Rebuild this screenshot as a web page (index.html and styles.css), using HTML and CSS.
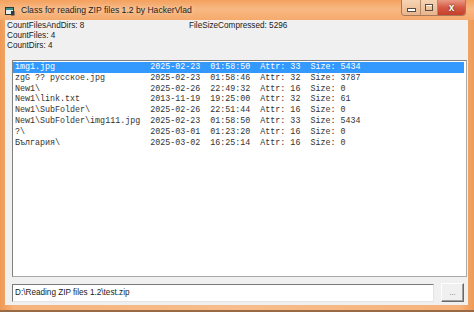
FILE: index.html
```html
<!DOCTYPE html>
<html lang="en">
<head>
    <meta charset="UTF-8">
    <title>Class for reading ZIP files 1.2 by HackerVlad</title>
    <link rel="stylesheet" href="styles.css">
</head>
<body>
    <div class="window">
        <div class="titlebar">
            <svg class="app-icon" width="10" height="10" viewBox="0 0 10 10">
                <rect x="0.5" y="1.5" width="8" height="7" fill="#e8eef0" stroke="#2b3a3a"/>
                <rect x="1" y="2" width="7" height="2" fill="#3f8f8a"/>
                <rect x="6" y="5" width="3.5" height="4.5" fill="#2b3a3a"/>
            </svg>
            <span class="title">Class for reading ZIP files 1.2 by HackerVlad</span>
            <div class="caption-buttons">
                <span class="cap cap-min"><i></i></span>
                <span class="cap cap-max"><i></i></span>
                <span class="cap cap-close">x</span>
            </div>
        </div>

        <div class="client">
            <div class="stats">
                <div class="stats-col">
                    <div>CountFilesAndDirs: 8</div>
                    <div>CountFiles: 4</div>
                    <div>CountDirs: 4</div>
                </div>
                <div class="stats-col">
                    <div>FileSizeCompressed: 5296</div>
                </div>
            </div>

            <div class="listbox">
                <div class="row selected"><span class="c-name">img1.jpg</span><span class="c-date">2025-02-23</span><span class="c-time">01:58:50</span><span class="c-attr">Attr: 33</span><span>Size: 5434</span></div>
                <div class="row"><span class="c-name">zgG ?? русское.jpg</span><span class="c-date">2025-02-23</span><span class="c-time">01:58:46</span><span class="c-attr">Attr: 32</span><span>Size: 3787</span></div>
                <div class="row"><span class="c-name">New1\</span><span class="c-date">2025-02-26</span><span class="c-time">22:49:32</span><span class="c-attr">Attr: 16</span><span>Size: 0</span></div>
                <div class="row"><span class="c-name">New1\link.txt</span><span class="c-date">2013-11-19</span><span class="c-time">19:25:00</span><span class="c-attr">Attr: 32</span><span>Size: 61</span></div>
                <div class="row"><span class="c-name">New1\SubFolder\</span><span class="c-date">2025-02-26</span><span class="c-time">22:51:44</span><span class="c-attr">Attr: 16</span><span>Size: 0</span></div>
                <div class="row"><span class="c-name">New1\SubFolder\img111.jpg</span><span class="c-date">2025-02-23</span><span class="c-time">01:58:50</span><span class="c-attr">Attr: 33</span><span>Size: 5434</span></div>
                <div class="row"><span class="c-name">?\</span><span class="c-date">2025-03-01</span><span class="c-time">01:23:20</span><span class="c-attr">Attr: 16</span><span>Size: 0</span></div>
                <div class="row"><span class="c-name">България\</span><span class="c-date">2025-03-02</span><span class="c-time">16:25:14</span><span class="c-attr">Attr: 16</span><span>Size: 0</span></div>
            </div>

            <div class="path-row">
                <div class="path-input">D:\Reading ZIP files 1.2\test.zip</div>
                <button class="browse">...</button>
            </div>
        </div>
    </div>
</body>
</html>
```

FILE: styles.css
```css
body {
    margin: 0;
    padding: 0;
    width: 474px;
    height: 312px;
    overflow: hidden;
    font-family: "Liberation Sans", Arial, sans-serif;
}

.window {
    width: 474px;
    height: 312px;
    box-sizing: border-box;
    background: linear-gradient(90deg, #ee9a55 0%, #f6b37c 3%, #f7bd8c 50%, #f6b27b 97%, #ee9a55 100%);
    border-bottom: 2px solid #9a6a44;
    display: flex;
    flex-direction: column;
}

.titlebar {
    height: 20px;
    display: flex;
    align-items: center;
    background: linear-gradient(180deg, #f3a15e 0%, #f8b883 45%, #f5aa6c 100%);
}

.app-icon {
    margin-left: 5px;
    margin-top: 1px;
}

.title {
    margin-left: 6px;
    font-size: 8.6px;
    color: #1e1e1e;
    text-shadow: 0 0 4px rgba(255, 235, 210, 0.9);
}

.caption-buttons {
    margin-left: auto;
    margin-right: 8px;
    align-self: flex-start;
    display: flex;
    border: 1px solid #a8785a;
    border-top: none;
    border-radius: 0 0 4px 4px;
    overflow: hidden;
}

.cap {
    height: 15px;
    display: flex;
    align-items: center;
    justify-content: center;
    background: linear-gradient(180deg, #f6d3b3, #e8b58c);
}

.cap-min {
    width: 18px;
    border-right: 1px solid #b48a6c;
}

.cap-min i {
    width: 7px;
    height: 2px;
    margin-top: 5px;
    background: #fff;
    border: 1px solid #5a4a40;
}

.cap-max {
    width: 16px;
    border-right: 1px solid #b48a6c;
}

.cap-max i {
    width: 6px;
    height: 5px;
    border: 1px solid #5a4a40;
    box-shadow: inset 0 1px 0 #fff;
}

.cap-close {
    width: 27px;
    background: linear-gradient(180deg, #e99a86 0%, #d55a44 50%, #c4402c 100%);
    color: #fff;
    font-weight: bold;
    font-size: 10px;
    line-height: 1;
    text-shadow: 0 0 2px #5a1a10;
}

.client {
    margin-left: 5px;
    width: 463px;
    height: 285px;
    background: #f0f0f0;
}

.stats {
    display: flex;
    padding: 1px 0 0 2px;
    font-size: 8.2px;
    line-height: 10px;
    color: #1a1a1a;
}

.stats-col:first-child {
    width: 182px;
}

.listbox {
    margin: 9px 0 0 7px;
    width: 455px;
    height: 217px;
    box-sizing: border-box;
    background: #fff;
    border: 1px solid #a9a9a9;
    border-top-color: #828282;
    border-left-color: #828282;
    padding: 1px 2px 0 0;
    font-family: "Liberation Mono", "Courier New", monospace;
    font-size: 8.35px;
    color: #333;
}

.row {
    display: flex;
    height: 10.8px;
    line-height: 10.8px;
    padding-left: 2px;
    white-space: pre;
}

.row.selected {
    background: #3399ff;
    color: #fff;
}

.c-name {
    width: 27ch;
}

.c-date,
.c-time,
.c-attr {
    margin-right: 2ch;
}

.path-row {
    display: flex;
    margin: 6px 0 0 7px;
}

.path-input {
    margin-top: 1px;
    width: 422px;
    height: 18px;
    box-sizing: border-box;
    background: #fff;
    border: 1px solid #e3e3e3;
    border-top-color: #7a7a7a;
    border-left-color: #7a7a7a;
    padding-left: 2px;
    font-size: 8.2px;
    line-height: 16px;
    color: #1a1a1a;
}

.browse {
    margin-left: 7px;
    width: 23px;
    height: 19px;
    padding: 0;
    background: #f0f0f0;
    border: 1px solid #fff;
    border-right-color: #696969;
    border-bottom-color: #696969;
    box-shadow: inset -1px -1px 0 #a0a0a0;
    font-family: "Liberation Sans", Arial, sans-serif;
    font-size: 7px;
    color: #666;
}
```
